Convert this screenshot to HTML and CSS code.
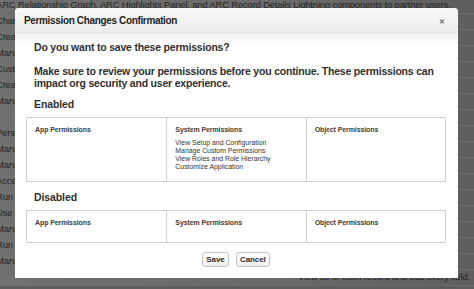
FILE: index.html
```html
<!DOCTYPE html>
<html lang="en">
<head>
    <meta charset="UTF-8">
    <title>Permission Changes Confirmation</title>
    <link rel="stylesheet" href="styles.css">
</head>
<body>

<!-- page behind the dialog -->
<div class="page">
    <div class="row">ARC Relationship Graph, ARC Highlights Panel, and ARC Record Details Lightning components to partner users.</div>
    <div class="row">Channels, and Lightning features for sites and partner portals.</div>
    <div class="row">Create apps and customize page layouts.</div>
    <div class="row">Manage Multi-Factor Authentication in the API.</div>
    <div class="row">Customize the organization using Setup.</div>
    <div class="row">Create and manage reports for the org.</div>
    <div class="row">Manage dashboards for all users.</div>
    <div class="row"></div>
    <div class="row">Personalize the user interface.</div>
    <div class="row">Manage connected apps.</div>
    <div class="row">Manage apps in the App Launcher.</div>
    <div class="row">Access the Salesforce API.</div>
    <div class="row">Run Views and list views.</div>
    <div class="row">Use the developer tools.</div>
    <div class="row">Manage contracts and accounts.</div>
    <div class="row">Run reports and export data.</div>
    <div class="row">Manage users and permission sets.</div>
    <div class="row last">View all of each record and edit every field.</div>
</div>

<div class="modal">
    <div class="modal-header">
        <span class="modal-title">Permission Changes Confirmation</span>
        <span class="modal-close">&#x2715;</span>
    </div>
    <div class="modal-body">
        <p class="question">Do you want to save these permissions?</p>
        <p class="warning">Make sure to review your permissions before you continue. These permissions can impact org security and user experience.</p>

        <h3 class="section-title">Enabled</h3>
        <div class="perm-table enabled">
            <div class="perm-col">
                <div class="perm-head">App Permissions</div>
            </div>
            <div class="perm-col">
                <div class="perm-head">System Permissions</div>
                <ul class="perm-list">
                    <li>View Setup and Configuration</li>
                    <li>Manage Custom Permissions</li>
                    <li>View Roles and Role Hierarchy</li>
                    <li>Customize Application</li>
                </ul>
            </div>
            <div class="perm-col">
                <div class="perm-head">Object Permissions</div>
            </div>
        </div>

        <h3 class="section-title">Disabled</h3>
        <div class="perm-table disabled">
            <div class="perm-col">
                <div class="perm-head">App Permissions</div>
            </div>
            <div class="perm-col">
                <div class="perm-head">System Permissions</div>
            </div>
            <div class="perm-col">
                <div class="perm-head">Object Permissions</div>
            </div>
        </div>

        <div class="button-container">
            <button>Save</button>
            <button>Cancel</button>
        </div>
    </div>
</div>

</body>
</html>
```

FILE: styles.css
```css
body {
    margin: 0;
    font-family: "Liberation Sans", Arial, sans-serif;
    background: #5e5e5e;
    overflow: hidden;
}
.page {
    margin-left: -4px;
    margin-top: -2px;
    width: 478px;
    overflow: hidden;
}
.row {
    height: 15px;
    line-height: 14px;
    font-size: 9.5px;
    letter-spacing: -0.2px;
    color: #262626;
    white-space: nowrap;
    border-bottom: 1px solid #6c6c6c;
    background: linear-gradient(90deg, #707070, #6a6a6a 60%, #5e5e5e);
}
.row.last {
    text-align: right;
    padding-right: 4px;
}
.modal {
    position: absolute;
    left: 15px;
    top: 8px;
    width: 443px;
    height: 270px;
    background: #fff;
    border-radius: 4px 4px 0 0;
}
.modal-header {
    height: 24px;
    display: flex;
    align-items: center;
    justify-content: space-between;
    padding: 0 13px 0 9px;
    background: linear-gradient(#f8f8f8, #ededed);
    border-radius: 4px 4px 0 0;
    border-bottom: 1px solid #e6e6e6;
}
.modal-title {
    font-size: 10px;
    letter-spacing: -0.35px;
    font-weight: bold;
    color: #1e1e1e;
}
.modal-close {
    font-size: 7px;
    font-weight: bold;
    color: #666;
    padding-top: 4px;
}
.modal-body {
    padding: 0 12px 0 11px;
    background: linear-gradient(#f0f0f0, #fff 12px);
    color: #2f2f2f;
}
.question, .warning, .section-title {
    margin: 0;
    padding-left: 8px;
    font-weight: bold;
    letter-spacing: -0.2px;
}
.question {
    font-size: 10.5px;
    padding-top: 7px;
    line-height: 14px;
}
.warning {
    font-size: 10.5px;
    line-height: 12px;
    margin-top: 11px;
}
.section-title {
    font-size: 10.5px;
    letter-spacing: -0.1px;
    margin-top: 8px;
    line-height: 14px;
}
.perm-table {
    display: grid;
    grid-template-columns: 1fr 1fr 1fr;
    border: 1px solid #cfcfcf;
    margin-top: 6px;
}
.perm-table.enabled {
    height: 63px;
}
.perm-table.disabled {
    height: 31px;
}
.perm-col {
    padding: 8px 8px 0;
    border-left: 1px solid #cfcfcf;
}
.perm-col:first-child {
    border-left: none;
}
.perm-head {
    font-size: 7px;
    letter-spacing: -0.1px;
    font-weight: bold;
    color: #3c3c3c;
}
.perm-list {
    list-style: none;
    margin: 6px 0 0;
    padding: 0;
    font-size: 6.9px;
    line-height: 8px;
    color: #333;
}
.button-container {
    margin-top: 5px;
    text-align: center;
}
.button-container button {
    margin: 0 1px;
    padding: 0 3.5px;
    height: 15px;
    font-family: "Liberation Sans", Arial, sans-serif;
    font-size: 8px;
    letter-spacing: -0.1px;
    font-weight: bold;
    color: #2f2f2f;
    border: 1px solid #c4c4c4;
    border-radius: 3px;
    background: linear-gradient(#fff, #efefef);
}
```
